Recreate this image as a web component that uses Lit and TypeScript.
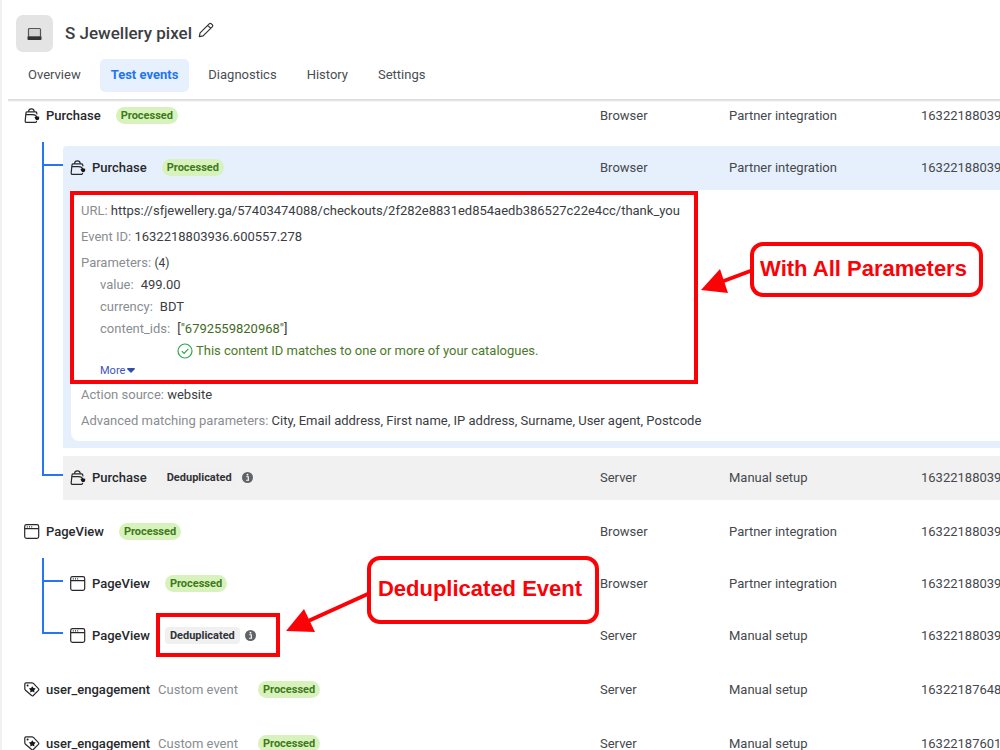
import { LitElement, html, css, svg, nothing, TemplateResult } from "lit";
import { customElement, property } from "lit/decorators.js";
import { classMap } from "lit/directives/class-map.js";

type IconName = "bag" | "window" | "tag";
type Status = "Processed" | "Deduplicated";

interface EventRow {
  icon: IconName;
  name: string;
  status: Status;
  source: string;
  method: string;
  id: string;
  custom?: boolean;
  open?: boolean;
}

interface EventGroup {
  parent: EventRow;
  children: EventRow[];
}

const PI = "Partner integration";
const MS = "Manual setup";

const groups: EventGroup[] = [
  {
    parent: { icon: "bag", name: "Purchase", status: "Processed", source: "Browser", method: PI, id: "16322188039" },
    children: [
      { icon: "bag", name: "Purchase", status: "Processed", source: "Browser", method: PI, id: "16322188039", open: true },
      { icon: "bag", name: "Purchase", status: "Deduplicated", source: "Server", method: MS, id: "16322188039" },
    ],
  },
  {
    parent: { icon: "window", name: "PageView", status: "Processed", source: "Browser", method: PI, id: "16322188039" },
    children: [
      { icon: "window", name: "PageView", status: "Processed", source: "Browser", method: PI, id: "16322188039" },
      { icon: "window", name: "PageView", status: "Deduplicated", source: "Server", method: MS, id: "16322188039" },
    ],
  },
  {
    parent: { icon: "tag", name: "user_engagement", status: "Processed", source: "Server", method: MS, id: "16322187648", custom: true },
    children: [],
  },
  {
    parent: { icon: "tag", name: "user_engagement", status: "Processed", source: "Server", method: MS, id: "16322187601", custom: true },
    children: [],
  },
];

const glyphs: Record<IconName, TemplateResult> = {
  bag: svg`
    <path d="M13 6.400L12.700 4.800Q12.500 3.800 11.500 3.800H3.200Q2.200 3.800 2 4.800L1.200 12.900Q1.100 14.400 2.500 14.400H11.400Q12.600 14.400 12.600 13" />
    <path d="M4.500 3.700Q4.700.8 7.400.8T10.300 3.700M1.800 6.600H8" />
    <path d="M8 6.600q4-.2 4.800 2.800" />
    <path class="solid" d="M10.400 9.400l2-1.200 2.800.6q.4 2-.8 3.200l-2.200.2z" />`,
  window: svg`
    <rect x=".7" y=".7" width="14" height="13.600" rx="1.8" />
    <path d="M.7 4.700h14M2.800 2.800h1M5 2.800h1M7.200 2.800h1" />`,
  tag: svg`
    <path d="M.8 2Q.8.800 2 .8H8Q8.800.8 9.400 1.400L14.400 6.600Q15.200 7.500 14.400 8.400L9.300 13.500Q8.500 14.200 7.600 13.500L1.500 8.200Q.8 7.600.8 6.800Z" />
    <circle class="solid" cx="3.600" cy="3.600" r="1" />
    <path class="solid" d="M8.300 4.200l1.200 1.900 2.200.4-1.500 1.700.2 2.300-2.100-.9-2.100.9.2-2.300-1.500-1.700 2.200-.4z" />`,
};

@customElement("event-icon")
class EventIcon extends LitElement {
  @property() name: IconName = "bag";

  static styles = css`
    :host { display: block; width: 16px; height: 16px; flex: none; }
    .glyph { display: block; width: 16px; height: 16px; fill: none; stroke: #26282b; stroke-width: 1.2; stroke-linejoin: round; }
    .solid { fill: #16181a; stroke: none; }
  `;

  render() {
    return html`<svg class="glyph" viewBox="0 0 16 16" aria-hidden="true">${glyphs[this.name]}</svg>`;
  }
}

@customElement("status-chip")
class StatusChip extends LitElement {
  @property() status: Status = "Processed";

  static styles = css`
    :host { display: flex; align-items: center; gap: 5px; }
    .chip { padding: 0 5px; border-radius: 9px; font-size: 11px; font-weight: 700; line-height: 17px; color: #3f7a18; background: #d7f2bd; }
    .muted { color: #303338; background: #f0f0f0; border-radius: 4px; font-weight: 700; }
    .info { display: block; width: 11px; height: 11px; }
    .tip { border: 0; padding: 0; background: none; }
  `;

  render() {
    const muted = this.status === "Deduplicated";
    return html`
      <span class=${classMap({ chip: true, muted })}>${this.status}</span>
      ${muted
        ? html`<button class="tip" aria-label="Info">
            <svg class="info" viewBox="0 0 11 11">
              <circle cx="5.500" cy="5.500" r="5.500" fill="#606367" />
              <path d="M4.300 4.700h2v3.300M4.100 8.300h3" fill="none" stroke="#fff" stroke-width="1.100" />
              <circle cx="5.500" cy="2.700" r=".9" fill="#fff" />
            </svg>
          </button>`
        : nothing}
    `;
  }
}

@customElement("event-details")
class EventDetails extends LitElement {
  static styles = css`
    :host { display: block; }
    .list { margin: 0; padding: 11px 10px 10px; display: flex; flex-direction: column; gap: 6px; background: #fff; border-radius: 0 0 0 8px; }
    .line { font-size: 13px; line-height: 20px; color: #3a3d42; white-space: nowrap; }
    .key { color: #8a8d91; }
    .count { font-size: 12px; }
    .params { margin: 1px 0 0; padding: 0 0 0 19px; list-style: none; }
    .param { display: flex; gap: 7px; line-height: 22px; }
    .id { color: #3f6b1e; }
    .match { display: flex; align-items: center; gap: 3px; padding-left: 77px; line-height: 22px; color: #4b7a28; }
    .check { width: 16px; height: 16px; fill: none; stroke: #2fa84a; stroke-width: 1.2; }
    .more { display: flex; align-items: center; gap: 2px; margin-left: 19px; border: 0; padding: 0; background: none; font: 11px/17px Roboto, sans-serif; color: #3b55c4; }
    .caret { width: 8px; height: 5px; fill: #2c4fb0; }
  `;

  render() {
    return html`
      <div class="list">
        <div class="line"><span class="key">URL:</span> https://sfjewellery.ga/57403474088/checkouts/2f282e8831ed854aedb386527c22e4cc/thank_you</div>
        <div class="line"><span class="key">Event ID:</span> 1632218803936.600557.278</div>
        <div class="line">
          <span class="key">Parameters:</span> <span class="count">(4)</span>
          <ul class="params">
            <li class="param"><span class="key">value:</span><span>499.00</span></li>
            <li class="param"><span class="key">currency:</span><span>BDT</span></li>
            <li class="param"><span class="key">content_ids:</span><span>[<span class="id">"6792559820968"</span>]</span></li>
            <li class="match">
              <svg class="check" viewBox="0 0 16 16" aria-hidden="true"><circle cx="8" cy="8" r="7" /><path d="M4.800 8.200l2.300 2.300 4.200-4.700" /></svg>
              This content ID matches to one or more of your catalogues.
            </li>
          </ul>
          <button class="more">More<svg class="caret" viewBox="0 0 8 5" aria-hidden="true"><path d="M0 1Q0 0 1 0H7Q8 0 8 1L4 5Z" /></svg></button>
        </div>
        <div class="line"><span class="key">Action source:</span> website</div>
        <div class="line"><span class="key">Advanced matching parameters:</span> City, Email address, First name, IP address, Surname, User agent, Postcode</div>
      </div>
    `;
  }
}

@customElement("app-root")
class AppRoot extends LitElement {
  static styles = css`
    :host { display: block; position: relative; height: 100vh; overflow: hidden; box-sizing: border-box; border-left: 2px solid #f1f1f1; background: #fff; font-family: Roboto, sans-serif; font-size: 13px; color: #45484d; }
    .head { position: relative; z-index: 1; background: #fff; padding: 15px 0 8px 14px; }
    .head::after { content: ""; position: absolute; left: 6px; right: 0; top: 100%; height: 3px; margin-top: -1px; background: linear-gradient(#d9d9d9, #e4e4e4 50%, #fff); }
    .title { display: flex; align-items: center; }
    .avatar { display: grid; place-items: center; width: 37px; height: 37px; border-radius: 7px; background: #e4e4e4; }
    .laptop { width: 15px; height: 14px; }
    .name { margin: 0 0 0 12px; padding-bottom: 2px; font-size: 17px; line-height: 20px; font-weight: 500; color: #3b3e43; }
    .edit { border: 0; padding: 0; margin: 0 0 7px 6px; background: none; }
    .pencil { display: block; width: 16px; height: 16px; fill: none; stroke: #303338; stroke-width: 1.2; stroke-linejoin: round; }
    .tabs { display: flex; gap: 8px; margin-top: 7px; padding-left: 1px; }
    .tab { border: 0; border-radius: 5px; padding: 0 11px 1px; background: none; font: 13px/32px Roboto, sans-serif; color: #4a4d52; }
    .active { background: #e7f1fe; color: #2374f2; font-weight: 700; }

    .events { display: flex; flex-direction: column; gap: 10px; margin-top: -6px; }
    .group { display: flex; flex-direction: column; gap: 8px; }
    .row { display: grid; grid-template-columns: minmax(0, 1fr) 129px 192px 79px; align-items: center; box-sizing: border-box; height: 44px; padding-bottom: 1px; white-space: nowrap; position: relative; }
    .cell { padding: 0; }
    .event { display: flex; align-items: center; padding-left: 22px; }
    .label { margin: 0 15px 0 6px; font-weight: 500; color: #26292d; }
    .custom { margin: 0 20px 0 -7px; color: #8a8d91; }

    .child { margin-left: 61px; }
    .child .event { padding-left: 7px; }
    .open { background: #e6f0fc; border-radius: 4px 0 0 0; }
    .shaded { background: #f1f1f1; }
    .child::before { content: ""; position: absolute; left: -21px; top: -4px; bottom: -8px; border-left: 2px solid #2477f0; }
    .child::after { content: ""; position: absolute; left: -20px; top: 18px; width: 20px; border-top: 2px solid #2477f0; }
    .last::before { bottom: 24px; }
    .detail { display: grid; position: relative; margin: -8px 0 0 61px; padding: 0 0 7px 8px; background: #e6f0fc; }
    .detail::before { content: ""; position: absolute; left: -21px; top: 0; bottom: -8px; border-left: 2px solid #2477f0; }

    .note { position: absolute; z-index: 2; box-sizing: border-box; border: 4px solid #fb0207; }
    .note-params { left: 68px; top: 191px; width: 628px; height: 193px; }
    .note-dedup { left: 154px; top: 613px; width: 124px; height: 44px; }
    .callout { display: grid; place-items: center; padding: 0 6px 2px 0; border-radius: 13px; background: #fff; font: 700 22px/26px "Liberation Sans", Arial, sans-serif; color: #fb0207; white-space: nowrap; }
    .callout-params { left: 748px; top: 242px; width: 233px; height: 55px; }
    .callout-dedup { left: 365px; top: 556px; width: 232px; height: 68px; }
    .arrow { position: absolute; z-index: 2; overflow: visible; fill: #fb0207; stroke: #fb0207; }
    .arrow-params { left: 699px; top: 269px; width: 52px; height: 25px; }
    .arrow-dedup { left: 284px; top: 592px; width: 84px; height: 41px; }
  `;

  private row(r: EventRow, child = false, last = false) {
    const cls = {
      row: true,
      child,
      last,
      open: !!r.open,
      shaded: child && r.icon === "bag" && !r.open,
    };
    return html`
      <tr class=${classMap(cls)}>
        <td class="cell event">
          <event-icon name=${r.icon}></event-icon>
          <span class="label">${r.name}</span>
          ${r.custom ? html`<span class="custom">Custom event</span>` : nothing}
          <status-chip status=${r.status}></status-chip>
        </td>
        <td class="cell">${r.source}</td>
        <td class="cell">${r.method}</td>
        <td class="cell">${r.id}</td>
      </tr>
      ${r.open ? html`<tr class="detail"><td class="cell" colspan="4"><event-details></event-details></td></tr>` : nothing}
    `;
  }

  render() {
    const tabs = ["Overview", "Test events", "Diagnostics", "History", "Settings"];
    return html`
      <header class="head">
        <div class="title">
          <span class="avatar">
            <svg class="laptop" viewBox="0 0 15 14" aria-hidden="true">
              <rect x="1.500" y="1.500" width="12" height="8.500" rx="1" fill="#d4d4d4" stroke="#555" stroke-width="1.200" />
              <path d="M.5 9.500h14v2.500q0 1-1 1h-12q-1 0-1-1z" fill="#333" />
            </svg>
          </span>
          <h1 class="name">S Jewellery pixel</h1>
          <button class="edit" aria-label="Rename">
            <svg class="pencil" viewBox="0 0 16 16"><path d="M1.300 14.700l.8-3.800L11.200 1.800q1-1 2.100 0l.9.9q1 1 0 2.100L5.100 13.900zM9.700 3.300l3 3" /></svg>
          </button>
        </div>
        <nav class="tabs">
          ${tabs.map((t) => html`<button class=${classMap({ tab: true, active: t === "Test events" })}>${t}</button>`)}
        </nav>
      </header>
      <table class="events">
        ${groups.map(
          (g) => html`<tbody class="group">
            ${this.row(g.parent)}
            ${g.children.map((c, i) => this.row(c, true, i === g.children.length - 1))}
          </tbody>`
        )}
      </table>

      <div class="note note-params"></div>
      <div class="note note-dedup"></div>
      <svg class="arrow arrow-params" viewBox="0 0 52 25" aria-hidden="true"><path d="M52 1L20 13" stroke-width="4" /><path d="M0 21L19 0L27 24Z" stroke="none" /></svg>
      <svg class="arrow arrow-dedup" viewBox="0 0 84 41" aria-hidden="true"><path d="M84 1L20 30" stroke-width="4" /><path d="M0 39L18 17L29 40Z" stroke="none" /></svg>
      <div class="note callout callout-params">With All Parameters</div>
      <div class="note callout callout-dedup">Deduplicated Event</div>
    `;
  }
}
